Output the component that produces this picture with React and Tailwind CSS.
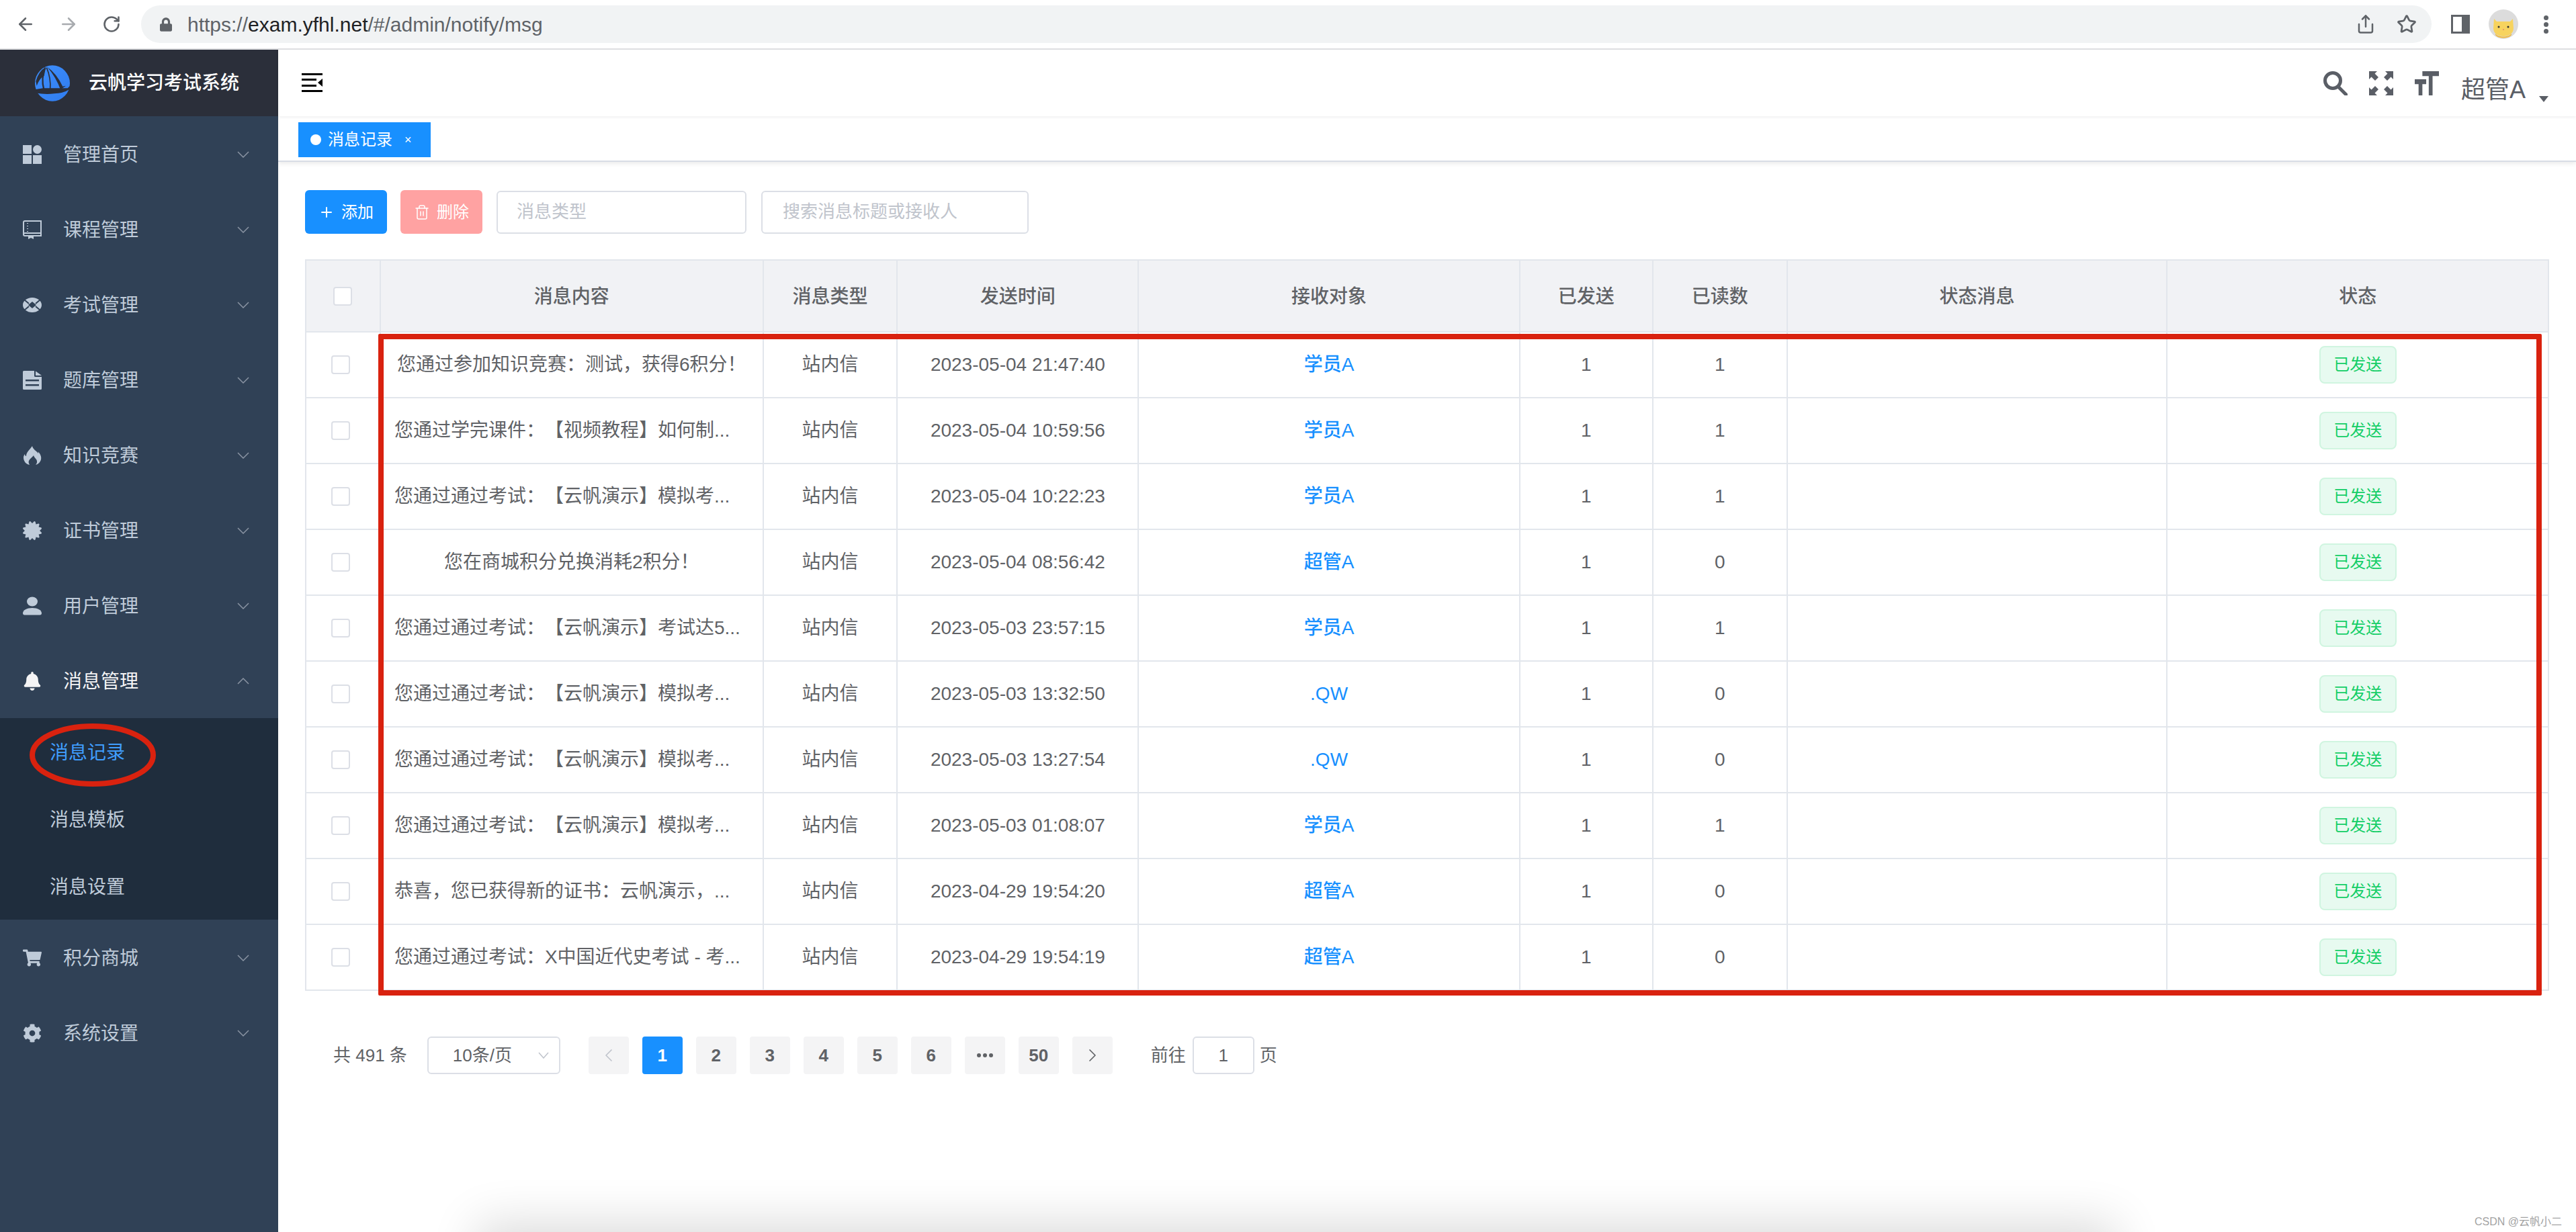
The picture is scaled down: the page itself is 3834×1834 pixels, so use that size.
import React from "react";
import { ArrowLeft, ArrowRight, RotateCw, Share, Star, Plus, Trash2, ChevronLeft, ChevronRight } from "lucide-react";
import { FaBell, FaCertificate, FaCog, FaLock, FaShoppingCart } from "react-icons/fa";

const cols = [
  "w-[111px]",
  "w-[570px]",
  "w-[200px]",
  "w-[359px]",
  "w-[568px]",
  "w-[198px]",
  "w-[200px]",
  "w-[566px]",
  "w-[568px]",
];

const heads = ["消息内容", "消息类型", "发送时间", "接收对象", "已发送", "已读数", "状态消息", "状态"];

const rows = [
  ["您通过参加知识竞赛：测试，获得6积分！", "2023-05-04 21:47:40", "学员A", "1", true],
  ["您通过学完课件：【视频教程】如何制...", "2023-05-04 10:59:56", "学员A", "1"],
  ["您通过通过考试：【云帆演示】模拟考...", "2023-05-04 10:22:23", "学员A", "1"],
  ["您在商城积分兑换消耗2积分！", "2023-05-04 08:56:42", "超管A", "0", true],
  ["您通过通过考试：【云帆演示】考试达5...", "2023-05-03 23:57:15", "学员A", "1"],
  ["您通过通过考试：【云帆演示】模拟考...", "2023-05-03 13:32:50", ".QW", "0"],
  ["您通过通过考试：【云帆演示】模拟考...", "2023-05-03 13:27:54", ".QW", "0"],
  ["您通过通过考试：【云帆演示】模拟考...", "2023-05-03 01:08:07", "学员A", "1"],
  ["恭喜，您已获得新的证书：云帆演示，...", "2023-04-29 19:54:20", "超管A", "0"],
  ["您通过通过考试：X中国近代史考试 - 考...", "2023-04-29 19:54:19", "超管A", "0"],
];

function DashIcon() {
  return (
    <svg viewBox="0 0 28 28" className="w-[28px] h-[28px]" fill="currentColor">
      <rect x="0" y="0" width="13" height="13" />
      <circle cx="21.5" cy="6.5" r="6.5" />
      <rect x="0" y="15" width="13" height="13" />
      <rect x="15" y="15" width="13" height="13" />
    </svg>
  );
}

function BookIcon() {
  return (
    <svg viewBox="0 0 28 28" className="w-[28px] h-[28px]" fill="none" stroke="currentColor" strokeWidth="2">
      <path d="M3 1h24v22H3a2 2 0 0 1-2-2V3a2 2 0 0 1 2-2z" />
      <path d="M1 21a2 2 0 0 1 2-2h24" />
      <path d="M7 4v1M7 8v1M7 12v1M7 16v1" />
      <path d="M8 22h8v6l-4-2-4 2z" fill="currentColor" stroke="none" />
    </svg>
  );
}

function RingIcon() {
  return (
    <svg viewBox="0 0 28 28" className="w-[28px] h-[28px]" fill="currentColor">
      <path
        fillRule="evenodd"
        d="M14 3c8 0 14 5 14 11s-6 11-14 11S0 20 0 14 6 3 14 3zM14 9l-6 5 6 5 6-5z"
      />
      <path d="M2 6l7 6M26 6l-7 6M2 22l7-6M26 22l-7-6" stroke="#304156" strokeWidth="2" />
    </svg>
  );
}

function DocIcon() {
  return (
    <svg viewBox="0 0 28 28" className="w-[28px] h-[28px]" fill="currentColor">
      <path
        fillRule="evenodd"
        d="M1.5 0h15.5v7.5a1.5 1.5 0 0 0 1.5 1.5H28v17.5a1.5 1.5 0 0 1-1.5 1.5h-25A1.5 1.5 0 0 1 0 26.5v-25A1.5 1.5 0 0 1 1.500 0zM4 13v2.500h20V13zM4 20v2.500h20V20z"
      />
      <path d="M19 0.500L28 7h-9z" />
    </svg>
  );
}

function FlameIcon() {
  return (
    <svg viewBox="0 0 28 28" className="w-[28px] h-[28px]" fill="currentColor">
      <path d="M14 0c1 5 6 7 9 11 0-1 0-2-1-3 4 3 6 8 5 12-1 4-4 7-8 8 2-2 3-5 1-8-1-2-3-3-4-6-2 3-6 5-7 8-1 2 0 4 1 6-5-1-9-5-9-11 0-2 1-4 2-5 0 2 1 3 2 3C5 9 10 6 14 0z" />
    </svg>
  );
}

function UserIcon() {
  return (
    <svg viewBox="0 0 28 28" className="w-[28px] h-[28px]" fill="currentColor">
      <ellipse cx="14" cy="7.500" rx="8" ry="7" />
      <path d="M0 25c0-5 6-8 14-8s14 3 14 8c0 1.500-1 2.500-2.500 2.500h-23C1 27.500 0 26.500 0 25z" />
    </svg>
  );
}

const menus = [
  { name: "管理首页", icon: <DashIcon /> },
  { name: "课程管理", icon: <BookIcon /> },
  { name: "考试管理", icon: <RingIcon /> },
  { name: "题库管理", icon: <DocIcon /> },
  { name: "知识竞赛", icon: <FlameIcon /> },
  { name: "证书管理", icon: <FaCertificate size={28} /> },
  { name: "用户管理", icon: <UserIcon /> },
];

function Chevron({ up }) {
  return (
    <svg viewBox="0 0 18 10" className="w-[18px] h-[10px] ml-auto mr-[43px]" fill="none" stroke="#8a94a3" strokeWidth="1.500">
      <path d={up ? "M1 9l8-8 8 8" : "M1 1l8 8 8-8"} />
    </svg>
  );
}

function MenuItem({ name, icon, active, up }) {
  return (
    <div className={"h-[112px] flex items-center pl-[34px] pt-[2px] text-[28px] " + (active ? "text-[#f4f4f5]" : "text-[#bfcbd9]")}>
      <span className="w-[28px] h-[28px] flex items-center justify-center shrink-0">{icon}</span>
      <span className="ml-[32px] pt-[2px]">{name}</span>
      <Chevron up={up} />
    </div>
  );
}

function Logo() {
  return (
    <svg viewBox="44 34 156 160" className="w-[52px] h-[54px] shrink-0">
      <defs>
        <linearGradient id="logoBlue" x1="0" y1="0" x2="1" y2="1">
          <stop offset="0" stopColor="#3f8ffb" />
          <stop offset="1" stopColor="#2f7cf0" />
        </linearGradient>
      </defs>
      <ellipse cx="122" cy="114" rx="78" ry="80" fill="url(#logoBlue)" />
      <path d="M92 42 Q60 60 48 105 L52 125 Q62 95 85 80 Z" fill="#2b2f3a" />
      <path d="M90 44 Q70 90 84 142" stroke="#2b2f3a" strokeWidth="7" fill="none" />
      <path d="M96 44 Q116 90 112 142" stroke="#2b2f3a" strokeWidth="5" fill="none" />
      <path d="M100 42 Q140 90 158 142 L182 125 L168 128 Q140 70 100 42 Z" fill="#2b2f3a" />
      <path d="M40 142 L80 136 L190 136 L204 122 L204 138 Q170 160 130 160 Q90 166 40 156 Z" fill="#2b2f3a" />
    </svg>
  );
}

function Avatar() {
  return (
    <svg viewBox="0 0 44 44" className="w-[44px] h-[44px] shrink-0">
      <circle cx="22" cy="22" r="22" fill="#dcdcdc" />
      <path d="M8 14l4 4h20l4-4 1 14c0 8-7 12-15 12S7 36 7 28z" fill="#f7d35e" />
      <path d="M10 36c4 6 20 6 24 0v2c-4 6-20 6-24 0z" fill="#f0b93e" />
      <circle cx="15" cy="26" r="1.500" fill="#333" />
      <circle cx="29" cy="26" r="1.500" fill="#333" />
      <circle cx="22" cy="30" r="1" fill="#e58a6b" />
    </svg>
  );
}

function BrowserBar() {
  return (
    <div className="h-[74px] border-b-2 border-[#dedfe1] bg-white flex items-center">
      <ArrowLeft className="w-[30px] h-[30px] ml-[23px] text-[#5f6368]" strokeWidth={2} />
      <ArrowRight className="w-[30px] h-[30px] ml-[34px] text-[#a8abaf]" strokeWidth={2} />
      <RotateCw className="w-[28px] h-[28px] ml-[35px] text-[#5f6368]" strokeWidth={2.200} />
      <div className="ml-[30px] h-[56px] w-[3409px] rounded-full bg-[#f1f3f4] flex items-center pl-[28px] pr-[22px]">
        <FaLock className="w-[18px] h-[21px] text-[#5f6368]" />
        <span className="ml-[23px] text-[30px] text-[#5f6368]">
          https://<span className="text-[#202124]">exam.yfhl.net</span>/#/admin/notify/msg
        </span>
        <Share className="ml-auto w-[30px] h-[30px] text-[#5f6368]" strokeWidth={2} />
        <Star className="ml-[31px] w-[30px] h-[30px] text-[#5f6368]" strokeWidth={2.200} />
      </div>
      <div className="ml-[29px] w-[28px] h-[28px] border-[3px] border-[#5f6368] border-r-[12px]" />
      <span className="ml-[28px]">
        <Avatar />
      </span>
      <div className="ml-[38px] flex flex-col gap-[3px]">
        <span className="w-[7px] h-[7px] rounded-full bg-[#5f6368]" />
        <span className="w-[7px] h-[7px] rounded-full bg-[#5f6368]" />
        <span className="w-[7px] h-[7px] rounded-full bg-[#5f6368]" />
      </div>
    </div>
  );
}

function Sidebar() {
  return (
    <aside className="relative w-[414px] shrink-0 bg-[#304156]">
      <div className="h-[99px] bg-[#2b2f3a] flex items-center pl-[52px]">
        <Logo />
        <span className="ml-[28px] text-[28px] font-medium text-white whitespace-nowrap">云帆学习考试系统</span>
      </div>
      {menus.map((m) => (
        <MenuItem key={m.name} {...m} />
      ))}
      <MenuItem name="消息管理" icon={<FaBell size={28} />} active up />
      <div className="bg-[#1f2d3d] text-[28px] text-[#bfcbd9]">
        <div className="h-[100px] flex items-center pl-[74px] pt-[4px] text-[#409eff]">消息记录</div>
        <div className="h-[100px] flex items-center pl-[74px] pt-[4px]">消息模板</div>
        <div className="h-[100px] flex items-center pl-[74px] pt-[4px]">消息设置</div>
      </div>
      <MenuItem name="积分商城" icon={<FaShoppingCart size={28} />} />
      <MenuItem name="系统设置" icon={<FaCog size={28} />} />
      {/* red marker from the annotated screenshot */}
      <svg viewBox="0 0 190 96" className="absolute left-[43px] top-[1002px] w-[190px] h-[96px]" fill="none">
        <ellipse cx="95" cy="48" rx="90" ry="43" stroke="#d9220f" strokeWidth="8" />
      </svg>
    </aside>
  );
}

function TopBar() {
  return (
    <div className="h-[99px] bg-white flex items-start shadow-[0_2px_4px_rgba(0,21,41,0.06)] relative z-10">
      <svg viewBox="0 0 31 28" className="ml-[35px] mt-[35px] w-[31px] h-[28px]" fill="#000">
        <rect x="0" y="0" width="31" height="3" />
        <rect x="0" y="8" width="22" height="3" />
        <rect x="0" y="17" width="22" height="3" />
        <rect x="0" y="25" width="31" height="3" />
        <path d="M31 8v12l-7-6z" />
      </svg>
      <div className="ml-auto mt-[32px] flex items-start text-[#5a5e66]">
        <svg viewBox="0 0 36 36" className="w-[36px] h-[36px]" fill="none" stroke="currentColor" strokeWidth="5">
          <circle cx="14" cy="14" r="11.500" />
          <path d="M22 23l12 12" strokeLinecap="round" />
        </svg>
        <svg viewBox="0 0 36 36" className="ml-[32px] w-[36px] h-[36px]" fill="currentColor">
          <path d="M0 0h12L8.500 3.500 14 9l-5 5-5.500-5.500L0 12zM36 0v12l-3.500-3.500L27 14l-5-5 5.500-5.500L24 0zM0 36V24l3.500 3.500L9 22l5 5-5.500 5.500L12 36zM36 36H24l3.500-3.500L22 27l5-5 5.500 5.500L36 24z" />
        </svg>
        <svg viewBox="3 4 19 15" preserveAspectRatio="none" className="ml-[32px] w-[36px] h-[36px]" fill="currentColor">
          <path d="M9 4v3h5v12h3V7h5V4H9zm-6 8h3v7h3v-7h3V9H3v3z" />
        </svg>
        <span className="ml-[33px] mt-[10px] text-[36px] leading-[36px] whitespace-nowrap">超管A</span>
        <span className="ml-[20px] mt-[37px] mr-[41px] w-0 h-0 border-x-[7px] border-x-transparent border-t-[9px] border-t-[#5a5e66]" />
      </div>
    </div>
  );
}

function TagBar() {
  return (
    <div className="h-[68px] bg-white border-b-2 border-[#d8dce5] shadow-[0_3px_6px_rgba(0,0,0,0.08)] pl-[30px] pt-[9px]">
      <div className="w-[197px] h-[52px] bg-[#1890ff] text-white text-[24px] flex items-center pl-[18px]">
        <span className="w-[16px] h-[16px] rounded-full bg-white" />
        <span className="ml-[10px]">消息记录</span>
        <span className="ml-[18px] text-[18px]">×</span>
      </div>
    </div>
  );
}

function Toolbar() {
  return (
    <div className="flex items-center h-[65px]">
      <button className="w-[122px] h-[65px] rounded-[6px] bg-[#1890ff] text-white text-[24px] flex items-center justify-center gap-[10px]">
        <Plus className="w-[24px] h-[24px]" strokeWidth={2} />
        添加
      </button>
      <button className="ml-[20px] w-[122px] h-[65px] rounded-[6px] bg-[#ffa2a2] text-white text-[24px] flex items-center justify-center gap-[10px]">
        <Trash2 className="w-[24px] h-[24px]" strokeWidth={1.500} />
        删除
      </button>
      <input
        placeholder="消息类型"
        className="ml-[21px] w-[372px] h-[64px] rounded-[6px] border-2 border-[#dcdfe6] px-[28px] text-[26px] placeholder:text-[#c0c4cc] outline-none"
      />
      <input
        placeholder="搜索消息标题或接收人"
        className="ml-[22px] w-[398px] h-[64px] rounded-[6px] border-2 border-[#dcdfe6] px-[30px] text-[26px] placeholder:text-[#c0c4cc] outline-none"
      />
    </div>
  );
}

function Check({ className }) {
  return <span className={"block w-[28px] h-[28px] rounded-[4px] border-2 border-[#dcdfe6] bg-white " + (className || "")} />;
}

function MsgTable() {
  return (
    <div className="mt-[38px] w-[3340px] border-l-2 border-t-2 border-[#e2e6ec] text-[28px] text-[#606266]">
      <div className="flex h-[107px] bg-[#f1f2f5] font-medium">
        <div className={cols[0] + " flex items-center justify-center border-r-2 border-b-2 border-[#e2e6ec]"}>
          <Check />
        </div>
        {heads.map((h, i) => (
          <div key={h} className={cols[i + 1] + " flex items-center justify-center border-r-2 border-b-2 border-[#e2e6ec] pt-[2px]"}>
            {h}
          </div>
        ))}
      </div>
      {rows.map((r, i) => (
        <div key={i} className="flex h-[98px]">
          <div className={cols[0] + " flex items-center justify-center pr-[7px] border-r-2 border-b-2 border-[#e2e6ec]"}>
            <Check />
          </div>
          <div className={cols[1] + " flex items-center border-r-2 border-b-2 border-[#e2e6ec] px-[20px] whitespace-nowrap " + (r[4] ? "justify-center" : "justify-start")}>
            {r[0]}
          </div>
          <div className={cols[2] + " flex items-center justify-center border-r-2 border-b-2 border-[#e2e6ec]"}>站内信</div>
          <div className={cols[3] + " flex items-center justify-center border-r-2 border-b-2 border-[#e2e6ec]"}>{r[1]}</div>
          <div className={cols[4] + " flex items-center justify-center border-r-2 border-b-2 border-[#e2e6ec] text-[#1890ff] font-medium"}>{r[2]}</div>
          <div className={cols[5] + " flex items-center justify-center border-r-2 border-b-2 border-[#e2e6ec]"}>1</div>
          <div className={cols[6] + " flex items-center justify-center border-r-2 border-b-2 border-[#e2e6ec]"}>{r[3]}</div>
          <div className={cols[7] + " border-r-2 border-b-2 border-[#e2e6ec]"} />
          <div className={cols[8] + " flex items-center justify-center border-r-2 border-b-2 border-[#e2e6ec]"}>
            <span className="w-[115px] h-[56px] rounded-[8px] bg-[#e7faf0] border-2 border-[#d0f5e0] text-[#13ce66] text-[24px] flex items-center justify-center">
              已发送
            </span>
          </div>
        </div>
      ))}
    </div>
  );
}

function PageBtn({ children, active, className }) {
  return (
    <span
      className={
        "w-[60px] h-[56px] rounded-[4px] flex items-center justify-center font-bold " +
        (active ? "bg-[#1890ff] text-white " : "bg-[#f4f4f5] text-[#606266] ") +
        (className || "")
      }
    >
      {children}
    </span>
  );
}

function Pager() {
  return (
    <div className="mt-[68px] h-[56px] flex items-center text-[26px] text-[#606266] whitespace-pre">
      <span className="ml-[42px]">共 491 条</span>
      <div className="ml-[30px] w-[198px] h-[56px] rounded-[6px] border-2 border-[#dcdfe6] flex items-center pl-[36px]">
        10条/页
        <svg viewBox="0 0 16 10" className="ml-[39px] w-[16px] h-[10px]" fill="none" stroke="#c0c4cc" strokeWidth="1.500">
          <path d="M1 1l7 8 7-8" />
        </svg>
      </div>
      <div className="ml-[42px] flex gap-[20px]">
        <PageBtn>
          <ChevronLeft className="w-[32px] h-[32px] text-[#c0c4cc]" strokeWidth={1.300} />
        </PageBtn>
        <PageBtn active>1</PageBtn>
        <PageBtn>2</PageBtn>
        <PageBtn>3</PageBtn>
        <PageBtn>4</PageBtn>
        <PageBtn>5</PageBtn>
        <PageBtn>6</PageBtn>
        <PageBtn className="gap-[3px]">
          <span className="w-[6px] h-[6px] rounded-full bg-[#606266]" />
          <span className="w-[6px] h-[6px] rounded-full bg-[#606266]" />
          <span className="w-[6px] h-[6px] rounded-full bg-[#606266]" />
        </PageBtn>
        <PageBtn>50</PageBtn>
        <PageBtn>
          <ChevronRight className="w-[32px] h-[32px] text-[#606266]" strokeWidth={1.300} />
        </PageBtn>
      </div>
      <span className="ml-[57px]">前往</span>
      <input
        readOnly
        value="1"
        className="ml-[10px] w-[92px] h-[56px] rounded-[6px] border-2 border-[#dcdfe6] text-center text-[26px] outline-none"
      />
      <span className="ml-[8px]">页</span>
    </div>
  );
}

export default function App() {
  return (
    <div className="relative w-[3834px] h-[1834px] overflow-hidden bg-white font-['Liberation_Sans','Noto_Sans_CJK_SC',sans-serif] [text-spacing-trim:space-all]">
      <BrowserBar />
      <div className="flex h-[1760px]">
        <Sidebar />
        <main className="flex-1 min-w-0">
          <TopBar />
          <TagBar />
          <div className="pt-[42px] pl-[40px]">
            <Toolbar />
            <MsgTable />
            <Pager />
          </div>
        </main>
      </div>
      {/* red box around the rows, drawn over the table */}
      <div className="absolute left-[563px] top-[497px] w-[3220px] h-[985px] border-[8px] border-[#d9220f] rounded-[2px]" />
      {/* page shadow bleeding in from below */}
      <div className="absolute left-[740px] top-[1850px] w-[2380px] h-[40px] shadow-[0_0_70px_30px_rgba(0,0,0,0.14)]" />
      <span className="absolute left-[3683px] top-[1807px] text-[16px] text-[#a3a3a3] whitespace-nowrap">CSDN @云帆小二</span>
    </div>
  );
}
